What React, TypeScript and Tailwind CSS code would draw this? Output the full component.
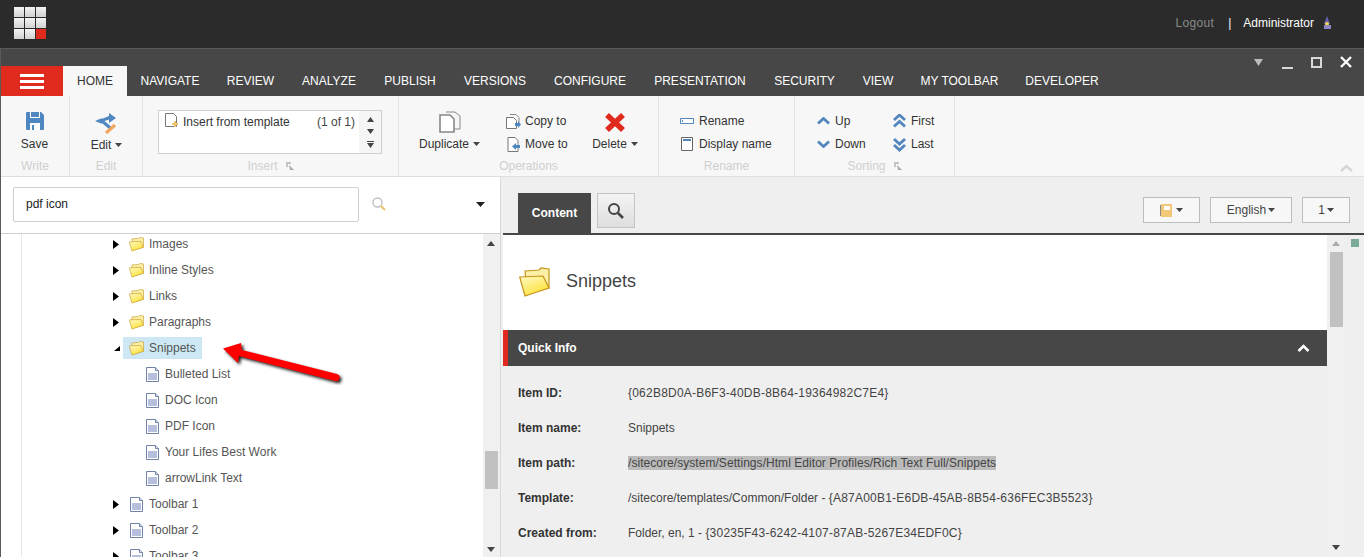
import React from "react";

function Caret({ className = "" }: { className?: string }) {
  return <svg width="7" height="4" viewBox="0 0 7 4" className={className}><path d="M0 0h7L3.5 4z" fill="#444" /></svg>;
}

function Folder({ size = 15 }: { size?: number }) {
  return (
    <svg width={size} height={size} viewBox="0 0 31 29" className="shrink-0">
      <defs>
        <linearGradient id="fg" x1="0" y1="0" x2="0.6" y2="1">
          <stop offset="0" stopColor="#fffac8" />
          <stop offset="1" stopColor="#fde137" />
        </linearGradient>
      </defs>
      <path d="M6 3l14-1 2-2 8 1v19L8 26z" fill="#fbeea6" stroke="#c2941a" strokeWidth="1.200" />
      <path d="M.7 9l23.300-1 6 12-24 8z" fill="url(#fg)" stroke="#c2941a" strokeWidth="1.200" />
    </svg>
  );
}

function Doc() {
  return (
    <svg width="13" height="15" viewBox="0 0 13 15" className="shrink-0">
      <path d="M.5.5h9l3 3v11H.5z" fill="#fff" stroke="#6f82a8" />
      <path d="M2 6h9v7H2z" fill="#b6c0dd" />
      <path d="M9.5.5v3h3" fill="#dfe4f0" stroke="#6f82a8" />
    </svg>
  );
}

function Expand({ open }: { open?: boolean }) {
  return open ? (
    <svg width="7" height="7" viewBox="0 0 7 7" className="shrink-0"><path d="M7 1v5H1z" fill="#000" /></svg>
  ) : (
    <svg width="6" height="9" viewBox="0 0 6 9" className="shrink-0"><path d="M0 0l6 4.500L0 9z" fill="#000" /></svg>
  );
}

function TreeRow({ label, kind, open, active }: { label: string; kind: "folder" | "doc"; open?: boolean; active?: boolean }) {
  return (
    <div className="h-[26px] flex items-center pl-[91px]">
      <div className="w-[10px] flex"><Expand open={open} /></div>
      <div className={`flex items-center h-[22px] ${active ? "bg-[#cde8f4] w-[79px]" : ""} ${kind === "folder" ? "pl-[6px] gap-[5px]" : "pl-[7px] gap-[6px]"}`}>
        {kind === "folder" ? <Folder /> : <Doc />}
        <span>{label}</span>
      </div>
    </div>
  );
}

function ChildRow({ label }: { label: string }) {
  return (
    <div className="h-[26px] flex items-center pl-[124px] gap-[6px]">
      <Doc />
      <span>{label}</span>
    </div>
  );
}

function Group({ label, width, children, launcher }: { label: string; width: string; children: React.ReactNode; launcher?: boolean }) {
  return (
    <div className={`${width} h-full border-r border-[#e3e3e3] flex flex-col shrink-0`}>
      <div className="h-[61px] flex">{children}</div>
      <div className="flex items-center justify-center gap-[8px] h-[17px] text-[#cfcfcf]">
        <span>{label}</span>
        {launcher && (
          <svg width="8" height="8" viewBox="0 0 8 8"><path d="M0 0h5v2H2v3H0z" fill="#c4c4c4" /><path d="M3 3l5 5H4z" fill="#aaa" /></svg>
        )}
      </div>
    </div>
  );
}

function Chevron({ up, double }: { up: boolean; double?: boolean }) {
  const c = "#5286bd";
  const d = up ? "M1 6l5.500-5L12 6" : "M1 1l5.500 5L12 1";
  return double ? (
    <svg width="13" height="15" viewBox="0 0 13 15" className="shrink-0">
      <path d={up ? "M1 6l5.500-5L12 6" : "M1 2l5.500 5L12 2"} fill="none" stroke={c} strokeWidth="2.800" />
      <path d={up ? "M1 12.500l5.500-5 5.500 5" : "M1 8l5.500 5L12 8"} fill="none" stroke={c} strokeWidth="2.800" />
    </svg>
  ) : (
    <svg width="13" height="8" viewBox="0 0 13 7" className="shrink-0"><path d={d} fill="none" stroke={c} strokeWidth="2.800" /></svg>
  );
}

function Info({ label, children }: { label: string; children: React.ReactNode }) {
  return (
    <div className="h-[35px] flex items-center">
      <div className="w-[110px] font-bold text-[#333]">{label}</div>
      <div className="text-[#444]">{children}</div>
    </div>
  );
}

function Guid({ children }: { children: string }) {
  return <span className="tracking-[0.22px]">{children}</span>;
}

export default function App() {
  const tabs = [
    { t: "NAVIGATE", w: "w-[86px]" },
    { t: "REVIEW", w: "w-[75px]" },
    { t: "ANALYZE", w: "w-[82px]" },
    { t: "PUBLISH", w: "w-[80px]" },
    { t: "VERSIONS", w: "w-[90px]" },
    { t: "CONFIGURE", w: "w-[100px]" },
    { t: "PRESENTATION", w: "w-[120px]" },
    { t: "SECURITY", w: "w-[89px]" },
    { t: "VIEW", w: "w-[58px]" },
    { t: "MY TOOLBAR", w: "w-[105px]" },
    { t: "DEVELOPER", w: "w-[100px]" },
  ];
  return (
    <div className="relative w-[1364px] h-[557px] overflow-hidden bg-[#2b2b2b] text-[12px] text-[#333] flex flex-col" style={{ fontFamily: '"Liberation Sans", Arial, sans-serif' }}>
      {/* global bar */}
      <div className="h-[48px] shrink-0 flex items-center pl-[14px] pr-[32px]">
        <div className="grid grid-cols-3 gap-[1px] w-[32px] h-[32px] -mt-[2px]">
          {[0, 1, 2, 3, 4, 5, 6, 7].map((i) => (
            <div key={i} className="bg-gradient-to-b from-[#f3f3f3] to-[#d2d2d2]" />
          ))}
          <div className="bg-[#e02a1e]" />
        </div>
        <div className="ml-auto flex items-center -mt-[2px]">
          <span className="text-[#8a8a8a] tracking-[0.35px]">Logout</span>
          <span className="text-white ml-[14px]">|</span>
          <span className="text-white ml-[12px]">Administrator</span>
          <svg width="9" height="14" viewBox="0 0 9 14" className="ml-[9px]">
            <path d="M4 0l3 8H1z" fill="#6a5fae" />
            <circle cx="4" cy="8" r="2" fill="#f2d74e" />
            <path d="M1 9h7v4H1z" fill="#8c86c4" />
          </svg>
        </div>
      </div>

      {/* window */}
      <div className="flex-1 flex flex-col border-t border-l border-[#5a5a5a] bg-[#efefef] min-h-0">
        <div className="h-[17px] shrink-0 bg-[#474747] relative">
          <svg width="9" height="7" viewBox="0 0 9 7" className="absolute left-[1253px] top-[10px]"><path d="M0 0h9L4.500 7z" fill="#bdbdbd" /></svg>
          <div className="absolute left-[1281px] top-[18px] w-[11px] h-[2px] bg-[#d8d8d8] z-10" />
          <div className="absolute left-[1310px] top-[8px] w-[11px] h-[11px] border-2 border-[#d8d8d8] z-10" />
          <svg width="12" height="12" viewBox="0 0 12 12" className="absolute left-[1339px] top-[7px] z-10"><path d="M1 1l10 10M11 1L1 11" stroke="#fff" strokeWidth="2.400" /></svg>
        </div>
        <div className="h-[30px] shrink-0 bg-[#474747] flex items-stretch">
          <div className="w-[62px] bg-[#e02a1e] flex flex-col items-center justify-center gap-[3px]">
            <div className="w-[24px] h-[3px] bg-white" />
            <div className="w-[24px] h-[3px] bg-white" />
            <div className="w-[24px] h-[3px] bg-white" />
          </div>
          <div className="w-[64px] bg-[#f7f7f7] flex items-center justify-center text-[#333]">HOME</div>
          {tabs.map(({ t, w }) => (
            <div key={t} className={`${w} flex items-center justify-center text-white whitespace-nowrap`}>{t}</div>
          ))}
        </div>

        {/* ribbon */}
        <div className="h-[81px] shrink-0 bg-[#f7f7f7] border-b border-[#dedede] flex relative">
          <Group label="Write" width="w-[69px]">
            <div className="w-full flex flex-col items-center pt-[16px] gap-[5px] pr-[1px]">
              <svg width="18" height="18" viewBox="0 0 18 18">
                <path d="M0 1a1 1 0 011-1h14l3 3v14a1 1 0 01-1 1H1a1 1 0 01-1-1z" fill="#4f87c0" />
                <path d="M4 0h10v6H4z" fill="#fff" />
                <path d="M5 0h8v5H5z" fill="#4f87c0" />
                <path d="M4 11h10v7H4z" fill="#fff" />
                <path d="M6 13h2v5H6z" fill="#4f87c0" />
              </svg>
              <span>Save</span>
            </div>
          </Group>
          <Group label="Edit" width="w-[73px]">
            <div className="w-full flex flex-col items-center pt-[17px] gap-[2px] pl-[1px]">
              <svg width="23" height="21" viewBox="0 0 23 21">
                <path d="M0 8l6-2.500h2L14 3V0l7 5-7 5V6.500L9.500 8 16 13.500 14 16 7.500 10.500H6z" fill="#4f87c0" />
                <path d="M11 20l9-8" stroke="#f0a561" strokeWidth="3.200" />
              </svg>
              <span className="flex items-center gap-[4px]">Edit<Caret /></span>
            </div>
          </Group>
          <Group label="Insert" width="w-[256px]" launcher>
            <div className="ml-[15px] mt-[14px] w-[224px] h-[44px] border border-[#cfcfcf] bg-white flex">
              <div className="flex-1 flex items-start pt-[2px] pl-[6px]">
                <svg width="14" height="15" viewBox="0 0 14 15" className="shrink-0">
                  <path d="M.5.5h8l3 3v10H.5z" fill="#fff" stroke="#777" />
                  <path d="M10 8v6M7 11h6" stroke="#f0c36a" strokeWidth="2" />
                </svg>
                <span className="ml-[4px] text-[#333]">Insert from template</span>
                <span className="ml-auto mr-[4px] text-[#444]">(1 of 1)</span>
              </div>
              <div className="w-[22px] bg-[#f5f5f5] flex flex-col items-center justify-around py-[2px]">
                <svg width="7" height="5" viewBox="0 0 7 5"><path d="M0 5h7L3.500 0z" fill="#444" /></svg>
                <svg width="7" height="5" viewBox="0 0 7 5"><path d="M0 0h7L3.500 5z" fill="#444" /></svg>
                <svg width="7" height="7" viewBox="0 0 7 7"><path d="M0 0h7v1H0zM0 2h7L3.500 7z" fill="#444" /></svg>
              </div>
            </div>
          </Group>
          <Group label="Operations" width="w-[260px]">
            <div className="w-[100px] flex flex-col items-center pt-[15px] gap-[2px] pl-[1px] shrink-0">
              <svg width="22" height="22" viewBox="0 0 22 22">
                <path d="M7 1h9l5 4v13h-5" fill="none" stroke="#888" />
                <path d="M1 4h10l4 4v13H1z" fill="#fff" stroke="#888" strokeWidth="1.600" />
              </svg>
              <span className="flex items-center gap-[4px]">Duplicate<Caret /></span>
            </div>
            <div className="flex flex-col w-[86px] shrink-0 pt-[17px] gap-[7px] pl-[7px]">
              <div className="h-[16px] flex items-center gap-[4px]">
                <svg width="15" height="15" viewBox="0 0 15 15"><path d="M4 .5h6l3 3v5" fill="none" stroke="#888" /><path d="M.5 3.500h7l3 3v8H.5z" fill="#fff" stroke="#777" /><path d="M9 9h3V7l3 3.500L12 14v-2H9z" fill="#4f87c0" /></svg>
                <span>Copy to</span>
              </div>
              <div className="h-[16px] flex items-center gap-[4px]">
                <svg width="15" height="15" viewBox="0 0 15 15"><path d="M2 .5h7l3 3v11H2z" fill="#fff" stroke="#777" /><path d="M14 8h-4V6L6 9.500 10 13v-2h4z" fill="#4f87c0" /></svg>
                <span>Move to</span>
              </div>
            </div>
            <div className="flex flex-col items-center pt-[16px] gap-[2px] w-[50px] ml-[5px] shrink-0">
              <svg width="22" height="21" viewBox="0 0 22 21"><path d="M3 3l16 15M19 3L3 18" stroke="#e02a1e" strokeWidth="5.600" /></svg>
              <span className="flex items-center gap-[4px]">Delete<Caret /></span>
            </div>
          </Group>
          <Group label="Rename" width="w-[136px]">
            <div className="flex flex-col pt-[17px] gap-[7px] pl-[21px]">
              <div className="h-[16px] flex items-center gap-[5px]">
                <svg width="14" height="6" viewBox="0 0 14 6"><path d="M.5.500h13v5H.5z" fill="#fff" stroke="#5286bd" /><path d="M2 2h1v2H2z" fill="#5286bd" /></svg>
                <span>Rename</span>
              </div>
              <div className="h-[16px] flex items-center gap-[5px]">
                <svg width="14" height="14" viewBox="0 0 14 14"><path d="M1.500.500h11v13h-11z" fill="#fff" stroke="#666" /><path d="M3 2h8v2H3z" fill="#5286bd" /></svg>
                <span>Display name</span>
              </div>
            </div>
          </Group>
          <Group label="Sorting" width="w-[160px]" launcher>
            <div className="grid grid-cols-[76px_auto] auto-rows-[16px] gap-y-[7px] pt-[17px] pl-[22px]">
              <div className="flex items-center gap-[5px]"><Chevron up />Up</div>
              <div className="flex items-center gap-[5px]"><Chevron up double />First</div>
              <div className="flex items-center gap-[5px]"><Chevron up={false} />Down</div>
              <div className="flex items-center gap-[5px]"><Chevron up={false} double />Last</div>
            </div>
          </Group>
          <svg width="13" height="8" viewBox="0 0 13 8" className="absolute left-[1339px] top-[68px]"><path d="M1 7l5.500-5L12 7" fill="none" stroke="#d5d5d5" strokeWidth="2.400" /></svg>
        </div>

        {/* main */}
        <div className="flex-1 flex min-h-0">
          {/* left */}
          <div className="w-[500px] shrink-0 bg-white flex flex-col min-h-0 border-r border-[#d8d8d8]">
            <div className="h-[57px] shrink-0 border-b border-[#cfcfcf] flex items-center pl-[12px] pb-[2px]">
              <div className="w-[346px] h-[35px] border border-[#cfcfcf] rounded-[2px] flex items-center pl-[12px] text-[#222]">pdf icon</div>
              <svg width="16" height="16" viewBox="0 0 16 16" className="ml-[12px]">
                <circle cx="6.500" cy="6.500" r="4.500" fill="#fff" stroke="#bdbdbd" strokeWidth="1.300" />
                <path d="M10 10l4 4" stroke="#e9c46a" strokeWidth="2.200" />
              </svg>
              <svg width="9" height="5" viewBox="0 0 9 5" className="ml-[89px]"><path d="M0 0h9L4.500 5z" fill="#222" /></svg>
            </div>
            <div className="flex-1 flex min-h-0 overflow-hidden">
              <div className="flex-1 ml-[20px] border-l border-[#e8e8e8] pt-0 min-w-0">
                <div className="-mt-[3px] text-[#555]">
                  <TreeRow label="Images" kind="folder" />
                  <TreeRow label="Inline Styles" kind="folder" />
                  <TreeRow label="Links" kind="folder" />
                  <TreeRow label="Paragraphs" kind="folder" />
                  <TreeRow label="Snippets" kind="folder" open active />
                  <ChildRow label="Bulleted List" />
                  <ChildRow label="DOC Icon" />
                  <ChildRow label="PDF Icon" />
                  <ChildRow label="Your Lifes Best Work" />
                  <ChildRow label="arrowLink Text" />
                  <TreeRow label="Toolbar 1" kind="doc" />
                  <TreeRow label="Toolbar 2" kind="doc" />
                  <TreeRow label="Toolbar 3" kind="doc" />
                </div>
              </div>
              <div className="w-[17px] shrink-0 bg-[#f0f0f0] flex flex-col items-center pl-[1px] pr-[2px]">
                <svg width="8" height="5" viewBox="0 0 8 5" className="mt-[7px] shrink-0"><path d="M0 5h8L4 0z" fill="#444" /></svg>
                <div className="w-[13px] h-[38px] bg-[#c1c1c1] mt-[205px] shrink-0" />
                <svg width="8" height="5" viewBox="0 0 8 5" className="mt-[58px] shrink-0"><path d="M0 0h8L4 5z" fill="#444" /></svg>
              </div>
            </div>
          </div>

          {/* right */}
          <div className="flex-1 ml-[2px] flex flex-col min-h-0 bg-[#efefef]">
            <div className="h-[56px] shrink-0 flex items-start pl-[15px] pr-[14px] pt-[16px]">
              <div className="w-[73px] h-[40px] bg-[#474747] text-white font-bold flex items-center justify-center">Content</div>
              <div className="ml-[6px] w-[38px] h-[35px] border border-[#c4c4c4] bg-gradient-to-b from-[#f4f4f4] to-[#dedede] flex items-center justify-center">
                <svg width="18" height="18" viewBox="0 0 18 18"><circle cx="7" cy="7" r="5" fill="none" stroke="#444" strokeWidth="2" /><path d="M11 11l5 5" stroke="#444" strokeWidth="2.600" /></svg>
              </div>
              <div className="ml-auto flex gap-[10px] mt-[4px]">
                <div className="w-[57px] h-[26px] border border-[#bdbdbd] bg-[#f7f7f7] flex items-center justify-center gap-[4px]">
                  <svg width="12" height="13" viewBox="0 0 12 13"><path d="M1 0h11v13H1z" fill="#f0c878" /><path d="M4 2h6v4H4z" fill="#fff" /><path d="M0 1h1v11H0z" fill="#888" /></svg>
                  <Caret />
                </div>
                <div className="w-[82px] h-[26px] border border-[#bdbdbd] bg-[#f7f7f7] flex items-center justify-center gap-[2px] text-[#444]">English<Caret /></div>
                <div className="w-[48px] h-[26px] border border-[#bdbdbd] bg-[#f7f7f7] flex items-center justify-center gap-[2px] text-[#444]">1<Caret /></div>
              </div>
            </div>
            <div className="h-[2px] shrink-0 bg-[#474747]" />
            <div className="flex-1 flex min-h-0 overflow-hidden">
              <div className="w-[824px] shrink-0 flex flex-col min-h-0">
                <div className="h-[95px] shrink-0 bg-white flex items-center pl-[16px] gap-[16px]">
                  <Folder size={31} />
                  <span className="text-[18px] text-[#444] -mt-[2px]">Snippets</span>
                </div>
                <div className="h-[36px] shrink-0 bg-[#474747] border-l-[5px] border-[#e02a1e] pl-[10px] pr-[17px] flex items-center justify-between text-white font-bold">
                  <span className="-mt-[1px]">Quick Info</span>
                  <svg width="13" height="9" viewBox="0 0 13 9"><path d="M1.500 7l5-5 5 5" fill="none" stroke="#fff" strokeWidth="2.600" /></svg>
                </div>
                <div className="pt-[9px] pl-[15px]">
                  <Info label="Item ID:"><Guid>{"{062B8D0A-B6F3-40DB-8B64-19364982C7E4}"}</Guid></Info>
                  <Info label="Item name:">Snippets</Info>
                  <Info label="Item path:"><span className="bg-[#bbbbbb] tracking-[0.05px]">/sitecore/system/Settings/Html Editor Profiles/Rich Text Full/Snippets</span></Info>
                  <Info label="Template:">/sitecore/templates/Common/Folder - <Guid>{"{A87A00B1-E6DB-45AB-8B54-636FEC3B5523}"}</Guid></Info>
                  <Info label="Created from:">Folder, en, 1 - <Guid>{"{30235F43-6242-4107-87AB-5267E34EDF0C}"}</Guid></Info>
                </div>
              </div>
              <div className="w-[16px] shrink-0 bg-[#f0f0f0] flex flex-col items-center">
                <svg width="8" height="5" viewBox="0 0 8 5" className="mt-[6px] shrink-0 ml-[2px]"><path d="M0 5h8L4 0z" fill="#aaa" /></svg>
                <div className="w-[13px] h-[75px] bg-[#c1c1c1] mt-[6px] shrink-0 ml-[2px]" />
                <svg width="8" height="5" viewBox="0 0 8 5" className="mt-[218px] shrink-0 ml-[2px]"><path d="M0 0h8L4 5z" fill="#444" /></svg>
              </div>
              <div className="w-[8px] h-[8px] bg-[#7aab98] ml-[8px] mt-[4px] shrink-0" />
            </div>
          </div>
        </div>
      </div>

      {/* annotation arrow */}
      <svg width="140" height="50" viewBox="0 0 140 50" className="absolute left-[215px] top-[335px] pointer-events-none">
        <defs>
          <filter id="sh" x="-20%" y="-40%" width="140%" height="180%">
            <feGaussianBlur stdDeviation="1.500" />
          </filter>
        </defs>
        <path d="M8 13.500L26 8l1 7 95 24a3.500 3.500 0 01-2 7L24 21l-1 7z" transform="translate(2 2)" fill="#222" filter="url(#sh)" />
        <path d="M8 13.500L26 8l1 7 95 24a3.500 3.500 0 01-2 7L24 21l-1 7z" fill="#ff0000" />
      </svg>
    </div>
  );
}
